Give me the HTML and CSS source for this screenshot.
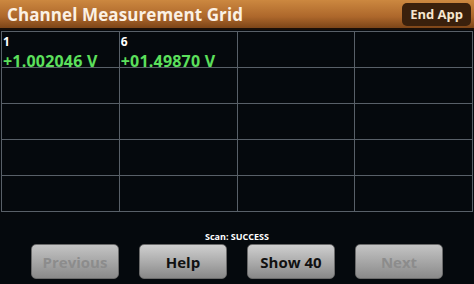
FILE: index.html
```html
<!DOCTYPE html>
<html lang="en">
<head>
  <meta charset="UTF-8" />
  <title>Channel Measurement Grid</title>
  <link rel="stylesheet" href="styles.css">
</head>
<body>
  <header class="topbar">
    <h1>Channel Measurement Grid</h1>
    <button class="end-btn">End App</button>
  </header>

  <div class="grid">
    <div class="cell"><span class="ch">1</span><span class="val">+1.002046 V</span></div>
    <div class="cell"><span class="ch">6</span><span class="val">+01.49870 V</span></div>
    <div class="cell"></div>
    <div class="cell"></div>
    <div class="cell"></div>
    <div class="cell"></div>
    <div class="cell"></div>
    <div class="cell"></div>
    <div class="cell"></div>
    <div class="cell"></div>
    <div class="cell"></div>
    <div class="cell"></div>
    <div class="cell"></div>
    <div class="cell"></div>
    <div class="cell"></div>
    <div class="cell"></div>
    <div class="cell"></div>
    <div class="cell"></div>
    <div class="cell"></div>
    <div class="cell"></div>
  </div>

  <div class="status">Scan: SUCCESS</div>

  <div class="actions">
    <button class="btn" disabled>Previous</button>
    <button class="btn">Help</button>
    <button class="btn">Show 40</button>
    <button class="btn" disabled>Next</button>
  </div>
</body>
</html>
```

FILE: styles.css
```css
body {
  margin: 0;
  width: 474px;
  height: 284px;
  overflow: hidden;
  background: #05090d;
  font-family: "Open Sans", "DejaVu Sans", sans-serif;
  color: white;
}

.topbar {
  height: 28px;
  display: flex;
  align-items: center;
  justify-content: space-between;
  padding: 0 3px 0 7px;
  background: linear-gradient(#cc8840, #ad672b 60%, #7d4518);
  border-bottom: 2px solid #1a0f08;
}

.topbar h1 {
  margin: 0;
  font-size: 17px;
  font-weight: bold;
  color: #fbf1e4;
  letter-spacing: 0.1px;
}

.end-btn {
  height: 23px;
  padding: 0 8px;
  border: none;
  border-radius: 5px;
  background: #3a200c;
  color: #f6e7cf;
  font-family: inherit;
  font-size: 13px;
  font-weight: bold;
}

.grid {
  margin: 1px 1px 0 1px;
  display: grid;
  grid-template-columns: repeat(4, 1fr);
  grid-template-rows: repeat(5, 36px);
  border-top: 1px solid #586068;
  border-left: 1px solid #586068;
}

.cell {
  border-right: 1px solid #586068;
  border-bottom: 1px solid #586068;
  display: flex;
  flex-direction: column;
  padding: 1px 0 0 1px;
  min-height: 0;
}

.ch {
  font-size: 12px;
  font-weight: bold;
  flex-shrink: 0;
}

.val {
  font-size: 16px;
  font-weight: bold;
  letter-spacing: 0.2px;
  color: #5ce05c;
  flex-shrink: 0;
}

.status {
  margin-top: 19px;
  text-align: center;
  font-size: 9px;
  font-weight: bold;
  line-height: 12px;
}

.actions {
  display: flex;
  justify-content: center;
  gap: 20px;
  margin-top: 1px;
}

.btn {
  width: 88px;
  height: 35px;
  border: 1px solid #6a6a6a;
  border-radius: 5px;
  background: linear-gradient(#cfcfcf, #a9a9a9 55%, #888888);
  color: #111;
  font-family: inherit;
  font-size: 15px;
  font-weight: bold;
}

.btn:disabled {
  background: linear-gradient(#c4c4c4, #a4a4a4 55%, #8a8a8a);
  color: #8c8c8c;
}
```
